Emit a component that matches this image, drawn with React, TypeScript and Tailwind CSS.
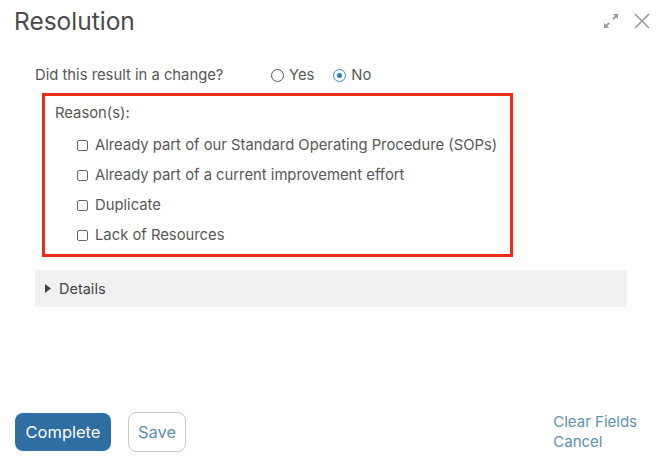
import { useState } from 'react';

const reasons = [
  'Already part of our Standard Operating Procedure (SOPs)',
  'Already part of a current improvement effort',
  'Duplicate',
  'Lack of Resources',
];

export default function App() {
  const [changed, setChanged] = useState<'yes' | 'no'>('no');
  const [checked, setChecked] = useState<Record<string, boolean>>({});

  return (
    <div className="relative h-[469px] w-[662px] bg-white font-['Inter',sans-serif] text-[#575757]">
      {/* header */}
      <div className="flex items-center justify-between pl-[14px] pr-[11px] pt-[5px]">
        <h2 className="text-[24.5px] leading-[32px] text-[#4a4a4a]">Resolution</h2>
        <div className="flex items-center gap-[13px] text-[#9a9a9a]">
          <svg width="18" height="18" viewBox="0 0 18 18" fill="currentColor">
            <path d="M11 2h5v5l-1.8-1.8-2.6 2.6-1.4-1.4 2.6-2.6z" />
            <path d="M7 16H2v-5l1.8 1.8 2.6-2.6 1.4 1.4-2.6 2.6z" />
          </svg>
          <svg width="18" height="18" viewBox="0 0 18 18" stroke="currentColor" strokeWidth="1.6" fill="none">
            <path d="M2 2l14 14M16 2L2 16" />
          </svg>
        </div>
      </div>

      {/* question */}
      <div className="mt-[28px] flex items-center pl-[35px] text-[14.8px] leading-5">
        <span className="w-[236px]">Did this result in a change?</span>
        <label className="flex items-center gap-[5px]" onClick={() => setChanged('yes')}>
          <span className="flex h-[13px] w-[13px] items-center justify-center rounded-full border border-[#555]">
            {changed === 'yes' && <span className="h-[5px] w-[5px] rounded-full bg-[#2f7fb8]" />}
          </span>
          Yes
        </label>
        <label className="ml-[19px] flex items-center gap-[5px]" onClick={() => setChanged('no')}>
          <span className={`flex h-[13px] w-[13px] items-center justify-center rounded-full border ${changed === 'no' ? 'border-[#3a8cc4]' : 'border-[#555]'}`}>
            {changed === 'no' && <span className="h-[5px] w-[5px] rounded-full bg-[#2f7fb8]" />}
          </span>
          No
        </label>
      </div>

      {/* reasons box */}
      <div className="ml-[42px] mt-[8px] h-[164px] w-[471px] border-[3px] border-[#ee2b16] pl-[10px] pt-[7px]">
        <div className="text-[14.8px] leading-5">Reason(s):</div>
        <div className="mt-[12px] flex flex-col gap-[10px] pl-[22px]">
          {reasons.map((r) => (
            <label
              key={r}
              className="flex items-center gap-[7px] text-[14.8px] leading-5"
              onClick={() => setChecked({ ...checked, [r]: !checked[r] })}
            >
              <span className="flex h-[11px] w-[11px] items-center justify-center rounded-[2px] border border-[#666] text-[9px] leading-none">
                {checked[r] ? '✓' : ''}
              </span>
              {r}
            </label>
          ))}
        </div>
      </div>

      {/* details */}
      <div className="ml-[35px] mt-[13px] flex h-[37px] w-[592px] items-center bg-[#f1f1f1] pl-[10px] text-[14.5px] text-[#444]">
        <svg width="6" height="9" viewBox="0 0 6 9" fill="#444" className="mr-[8px]">
          <path d="M0 0l6 4.5L0 9z" />
        </svg>
        Details
      </div>

      {/* footer */}
      <div className="absolute bottom-[17px] left-[15px] right-[25px] flex items-center justify-between">
        <div className="flex items-center gap-[17px]">
          <button className="h-[38px] w-[96px] rounded-[8px] bg-[#2f6ea2] text-[16.5px] text-white">Complete</button>
          <button className="h-[40px] w-[58px] rounded-[8px] border border-[#c8c8c8] text-[16.5px] text-[#5d8fae]">Save</button>
        </div>
        <div className="flex flex-col text-[15px] leading-[20px] text-[#5c93b0]">
          <span>Clear Fields</span>
          <span>Cancel</span>
        </div>
      </div>
    </div>
  );
}
